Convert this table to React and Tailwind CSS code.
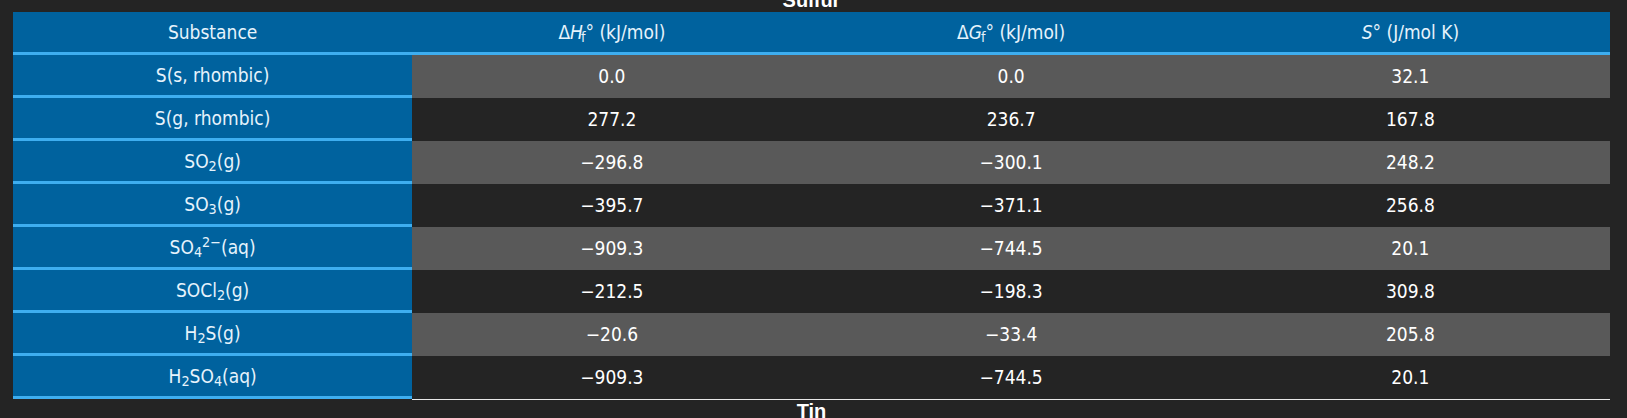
import React from "react";

const rows = [
  { name: <>S(s, rhombic)</>, h: "0.0", g: "0.0", s: "32.1" },
  { name: <>S(g, rhombic)</>, h: "277.2", g: "236.7", s: "167.8" },
  { name: <>SO<sub>2</sub>(g)</>, h: "−296.8", g: "−300.1", s: "248.2" },
  { name: <>SO<sub>3</sub>(g)</>, h: "−395.7", g: "−371.1", s: "256.8" },
  { name: <>SO<sub>4</sub><sup>2−</sup>(aq)</>, h: "−909.3", g: "−744.5", s: "20.1" },
  { name: <>SOCl<sub>2</sub>(g)</>, h: "−212.5", g: "−198.3", s: "309.8" },
  { name: <>H<sub>2</sub>S(g)</>, h: "−20.6", g: "−33.4", s: "205.8" },
  { name: <>H<sub>2</sub>SO<sub>4</sub>(aq)</>, h: "−909.3", g: "−744.5", s: "20.1" },
];

const tableFont = { fontFamily: '"DejaVu Sans Condensed", "Noto Sans", sans-serif' };

function HeadCell({ children }) {
  return (
    <div className="h-[43px] bg-[#00629e] border-b-[3px] border-[#3eaef0] flex items-center justify-center text-[19px] text-[#e6f3fc]">
      <span>{children}</span>
    </div>
  );
}

export default function App() {
  return (
    <div className="w-[1627px] h-[418px] overflow-hidden bg-[#242424]">
      <div className="-mt-[11px] pl-[13px] pr-[17px]">
        <div className="text-center text-white font-bold text-[20px] leading-[23px] font-['Liberation_Sans',Arial,sans-serif]">
          Sulfur
        </div>
        <div className="grid grid-cols-4" style={tableFont}>
          <HeadCell>Substance</HeadCell>
          <HeadCell>
            Δ<i>H</i>
            <sub className="-ml-[2px]">f</sub>° (kJ/mol)
          </HeadCell>
          <HeadCell>
            Δ<i>G</i>
            <sub className="-ml-[1px]">f</sub>° (kJ/mol)
          </HeadCell>
          <HeadCell>
            <i>S</i>° (J/mol K)
          </HeadCell>
          {rows.map((r, i) => {
            const bg = i % 2 === 0 ? "bg-[#595959]" : "bg-[#242424]";
            return (
              <React.Fragment key={i}>
                <div className="h-[43px] bg-[#00629e] border-b-[3px] border-[#3eaef0] flex items-center justify-center text-[19px] text-[#e6f3fc]">
                  <span>{r.name}</span>
                </div>
                <div className={`h-[43px] ${bg} flex items-center justify-center text-[19px] text-white`}>{r.h}</div>
                <div className={`h-[43px] ${bg} flex items-center justify-center text-[19px] text-white`}>{r.g}</div>
                <div className={`h-[43px] ${bg} flex items-center justify-center text-[19px] text-white`}>{r.s}</div>
              </React.Fragment>
            );
          })}
        </div>
        <div className="grid grid-cols-4">
          <div />
          <div className="col-span-3 h-px bg-[#e8e8e8]" />
        </div>
        <div className="text-center text-white font-bold text-[20px] leading-[23px] font-['Liberation_Sans',Arial,sans-serif]">
          Tin
        </div>
      </div>
    </div>
  );
}
